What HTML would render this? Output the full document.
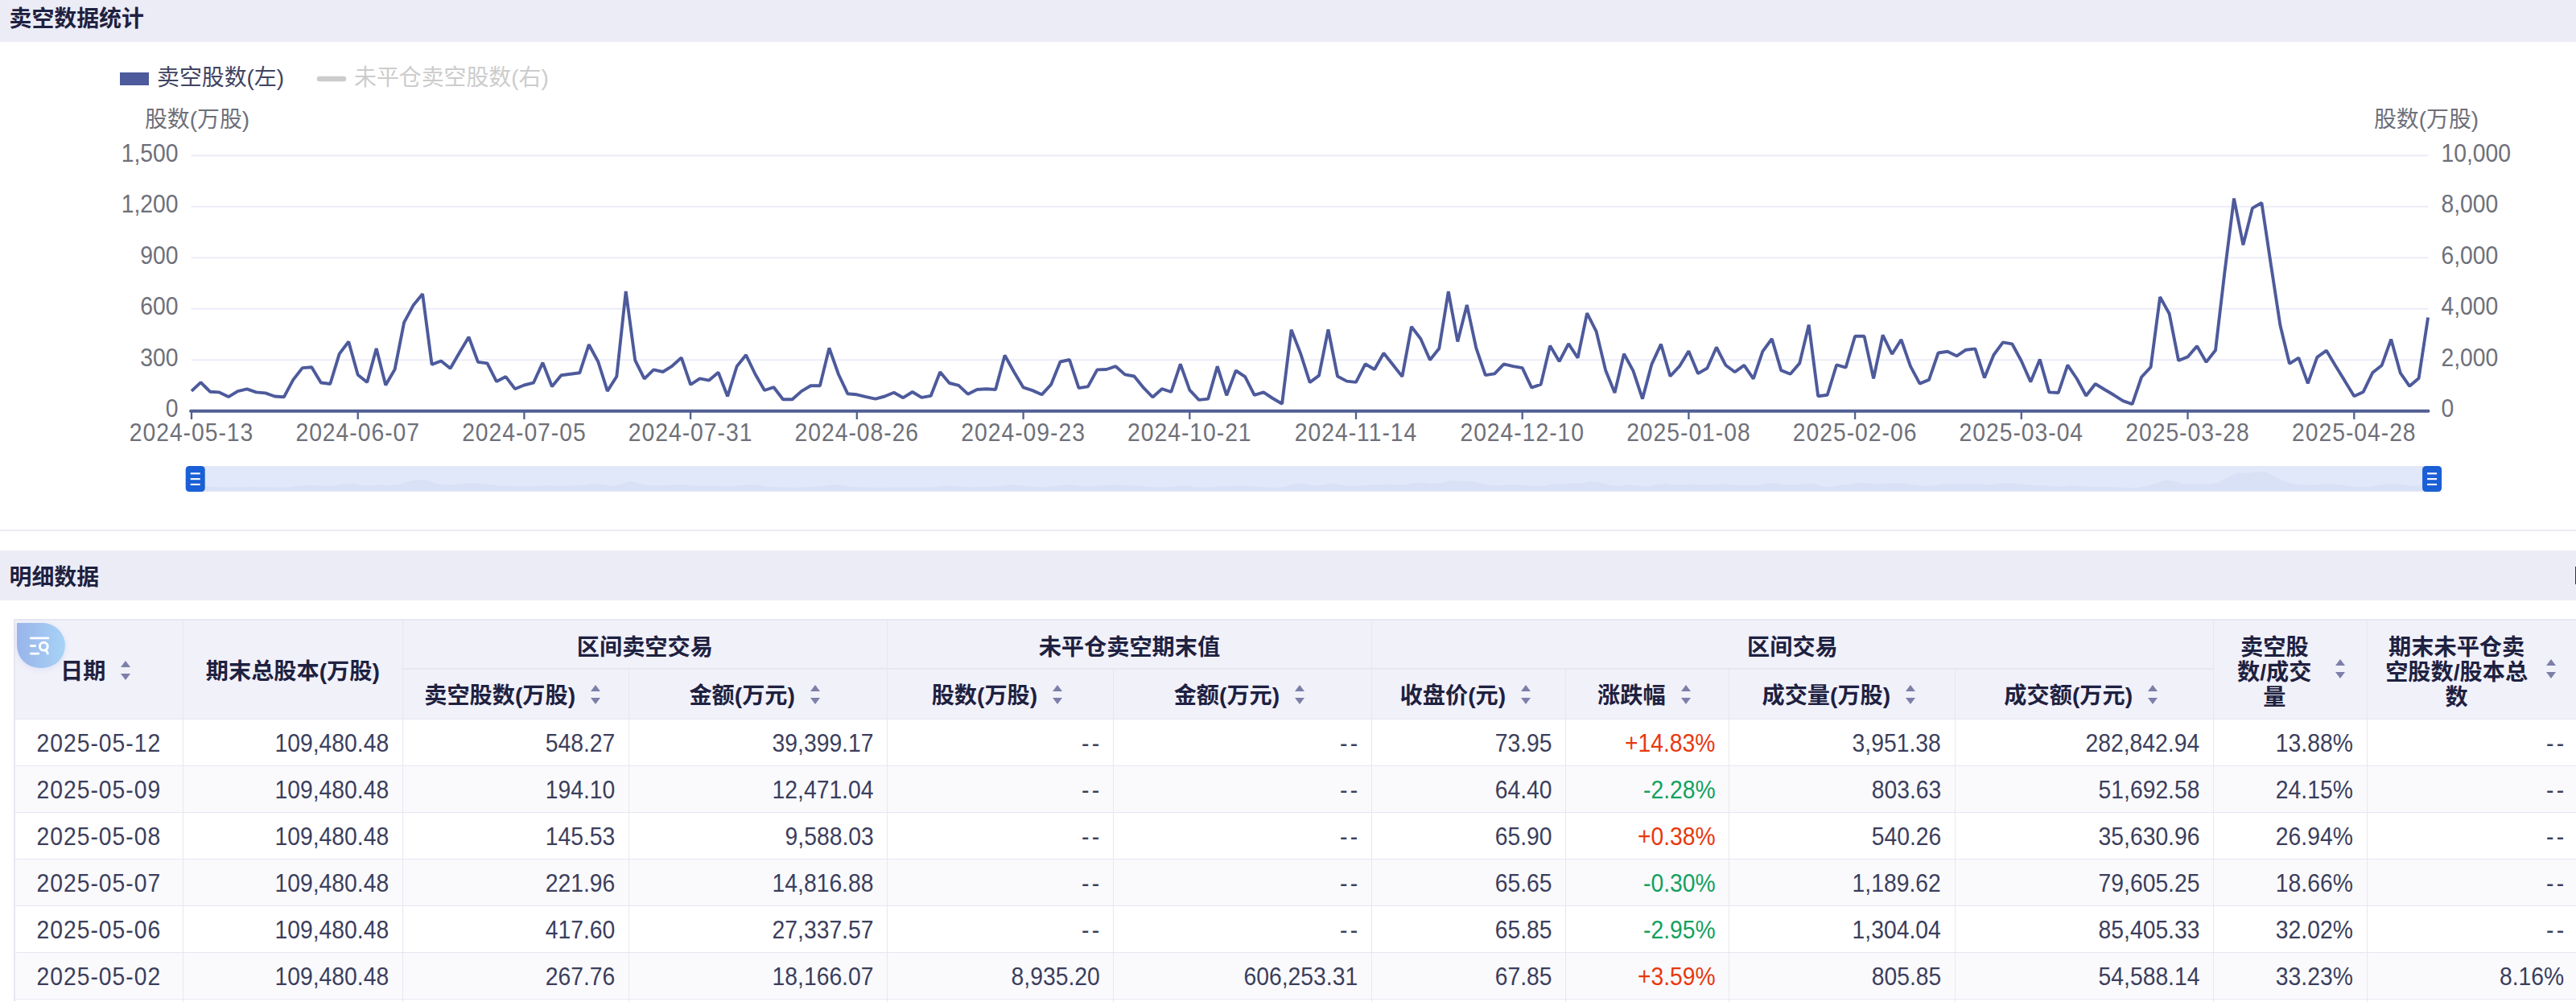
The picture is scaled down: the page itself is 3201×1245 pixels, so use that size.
<!DOCTYPE html>
<html lang="zh-CN"><head><meta charset="utf-8"><title>卖空数据统计</title>
<style>
html,body{margin:0;padding:0;background:#fff;}
body{width:3201px;height:1245px;overflow:hidden;position:relative;font-family:"Liberation Sans","Noto Sans CJK SC",sans-serif;color:#3b3e5c;}
.band{position:absolute;left:0;width:3201px;background:#ececf6;}
.band .t{position:absolute;left:11.5px;font-weight:bold;font-size:27.9px;color:#1e2140;white-space:nowrap;line-height:40px;}
svg{position:absolute;left:0;top:0;}
svg text{font-family:"Liberation Sans","Noto Sans CJK SC",sans-serif;}
.sep{position:absolute;left:0;width:3201px;height:2px;background:#ebebf4;}
.tbl{position:absolute;left:0;top:0;width:3201px;height:1245px;overflow:hidden;}
.c{position:absolute;box-sizing:border-box;white-space:nowrap;}
.h{background:#f1f1fa;font-weight:bold;font-size:28.2px;color:#1e2140;display:flex;align-items:center;justify-content:center;text-align:center;line-height:31px;}
.vl{position:absolute;width:1.2px;background:#e7e7f2;}
.hl{position:absolute;height:1.3px;background:#e7e7f2;}
.d{font-size:31.8px;line-height:58px;height:58px;text-align:right;padding-right:17px;color:#3b3e5c;}
.d span{display:inline-block;transform:scaleX(.89);transform-origin:right center;}
.d.dt{text-align:center;padding-right:0;letter-spacing:1.1px;}
.d.dt span{transform-origin:center center;}
.d.na{letter-spacing:3.5px;padding-right:14px;}
.up{color:#e8380d;}
.dn{color:#12a15e;}
.so{display:inline-block;width:13px;height:24px;margin-left:19px;position:relative;flex:none;top:-1.5px;}
.so:before{content:"";position:absolute;left:0;top:0;border-left:6.5px solid transparent;border-right:6.5px solid transparent;border-bottom:8.5px solid #7d7fa9;}
.so:after{content:"";position:absolute;left:0;bottom:0;border-left:6.5px solid transparent;border-right:6.5px solid transparent;border-top:8.5px solid #7d7fa9;}
</style></head>
<body>
<div class="band" style="top:0;height:52px"><div class="t" style="top:4px">卖空数据统计</div></div>
<div class="sep" style="top:657.5px"></div>
<div class="band" style="top:684px;height:61.5px"><div class="t" style="top:14px">明细数据</div><div style="position:absolute;left:3199.6px;top:20px;width:2px;height:22px;background:#2e3257"></div></div>
<svg width="3201" height="680" viewBox="0 0 3201 680">
<rect x="149" y="90" width="36" height="16" fill="#4d5a9b"/>
<text x="195" y="106" font-size="27.9" fill="#41445f">卖空股数(左)</text>
<line x1="397" y1="98" x2="427" y2="98" stroke="#cccccc" stroke-width="6.5" stroke-linecap="round"/>
<text x="440" y="106" font-size="27.9" fill="#cccccc">未平仓卖空股数(右)</text>
<text x="245" y="158" font-size="27.9" fill="#6e7079" text-anchor="middle">股数(万股)</text>
<text x="3015" y="158" font-size="27.9" fill="#6e7079" text-anchor="middle">股数(万股)</text>
<line x1="237.5" y1="193.2" x2="3017.5" y2="193.2" stroke="#ececf8" stroke-width="2"/>
<line x1="237.5" y1="256.7" x2="3017.5" y2="256.7" stroke="#ececf8" stroke-width="2"/>
<line x1="237.5" y1="320.2" x2="3017.5" y2="320.2" stroke="#ececf8" stroke-width="2"/>
<line x1="237.5" y1="383.8" x2="3017.5" y2="383.8" stroke="#ececf8" stroke-width="2"/>
<line x1="237.5" y1="447.3" x2="3017.5" y2="447.3" stroke="#ececf8" stroke-width="2"/>
<text transform="translate(221.5,200.5) scale(0.89,1)" font-size="31.8" fill="#6e7079" text-anchor="end">1,500</text>
<text transform="translate(3033.5,200.5) scale(0.89,1)" font-size="31.8" fill="#6e7079">10,000</text>
<text transform="translate(221.5,264.0) scale(0.89,1)" font-size="31.8" fill="#6e7079" text-anchor="end">1,200</text>
<text transform="translate(3033.5,264.0) scale(0.89,1)" font-size="31.8" fill="#6e7079">8,000</text>
<text transform="translate(221.5,327.5) scale(0.89,1)" font-size="31.8" fill="#6e7079" text-anchor="end">900</text>
<text transform="translate(3033.5,327.5) scale(0.89,1)" font-size="31.8" fill="#6e7079">6,000</text>
<text transform="translate(221.5,391.1) scale(0.89,1)" font-size="31.8" fill="#6e7079" text-anchor="end">600</text>
<text transform="translate(3033.5,391.1) scale(0.89,1)" font-size="31.8" fill="#6e7079">4,000</text>
<text transform="translate(221.5,454.6) scale(0.89,1)" font-size="31.8" fill="#6e7079" text-anchor="end">300</text>
<text transform="translate(3033.5,454.6) scale(0.89,1)" font-size="31.8" fill="#6e7079">2,000</text>
<text transform="translate(221.5,518.1) scale(0.89,1)" font-size="31.8" fill="#6e7079" text-anchor="end">0</text>
<text transform="translate(3033.5,518.1) scale(0.89,1)" font-size="31.8" fill="#6e7079">0</text>
<line x1="237" y1="510.8" x2="3017.5" y2="510.8" stroke="#525f93" stroke-width="3.9" stroke-linecap="round"/>
<line x1="238.0" y1="510" x2="238.0" y2="521" stroke="#525f93" stroke-width="2.3"/>
<text transform="translate(238.0,547.9) scale(0.89,1)" font-size="31.8" fill="#6e7079" text-anchor="middle" letter-spacing="1.1">2024-05-13</text>
<line x1="444.7" y1="510" x2="444.7" y2="521" stroke="#525f93" stroke-width="2.3"/>
<text transform="translate(444.7,547.9) scale(0.89,1)" font-size="31.8" fill="#6e7079" text-anchor="middle" letter-spacing="1.1">2024-06-07</text>
<line x1="651.4" y1="510" x2="651.4" y2="521" stroke="#525f93" stroke-width="2.3"/>
<text transform="translate(651.4,547.9) scale(0.89,1)" font-size="31.8" fill="#6e7079" text-anchor="middle" letter-spacing="1.1">2024-07-05</text>
<line x1="858.1" y1="510" x2="858.1" y2="521" stroke="#525f93" stroke-width="2.3"/>
<text transform="translate(858.1,547.9) scale(0.89,1)" font-size="31.8" fill="#6e7079" text-anchor="middle" letter-spacing="1.1">2024-07-31</text>
<line x1="1064.8" y1="510" x2="1064.8" y2="521" stroke="#525f93" stroke-width="2.3"/>
<text transform="translate(1064.8,547.9) scale(0.89,1)" font-size="31.8" fill="#6e7079" text-anchor="middle" letter-spacing="1.1">2024-08-26</text>
<line x1="1271.6" y1="510" x2="1271.6" y2="521" stroke="#525f93" stroke-width="2.3"/>
<text transform="translate(1271.6,547.9) scale(0.89,1)" font-size="31.8" fill="#6e7079" text-anchor="middle" letter-spacing="1.1">2024-09-23</text>
<line x1="1478.3" y1="510" x2="1478.3" y2="521" stroke="#525f93" stroke-width="2.3"/>
<text transform="translate(1478.3,547.9) scale(0.89,1)" font-size="31.8" fill="#6e7079" text-anchor="middle" letter-spacing="1.1">2024-10-21</text>
<line x1="1685.0" y1="510" x2="1685.0" y2="521" stroke="#525f93" stroke-width="2.3"/>
<text transform="translate(1685.0,547.9) scale(0.89,1)" font-size="31.8" fill="#6e7079" text-anchor="middle" letter-spacing="1.1">2024-11-14</text>
<line x1="1891.7" y1="510" x2="1891.7" y2="521" stroke="#525f93" stroke-width="2.3"/>
<text transform="translate(1891.7,547.9) scale(0.89,1)" font-size="31.8" fill="#6e7079" text-anchor="middle" letter-spacing="1.1">2024-12-10</text>
<line x1="2098.4" y1="510" x2="2098.4" y2="521" stroke="#525f93" stroke-width="2.3"/>
<text transform="translate(2098.4,547.9) scale(0.89,1)" font-size="31.8" fill="#6e7079" text-anchor="middle" letter-spacing="1.1">2025-01-08</text>
<line x1="2305.1" y1="510" x2="2305.1" y2="521" stroke="#525f93" stroke-width="2.3"/>
<text transform="translate(2305.1,547.9) scale(0.89,1)" font-size="31.8" fill="#6e7079" text-anchor="middle" letter-spacing="1.1">2025-02-06</text>
<line x1="2511.8" y1="510" x2="2511.8" y2="521" stroke="#525f93" stroke-width="2.3"/>
<text transform="translate(2511.8,547.9) scale(0.89,1)" font-size="31.8" fill="#6e7079" text-anchor="middle" letter-spacing="1.1">2025-03-04</text>
<line x1="2718.5" y1="510" x2="2718.5" y2="521" stroke="#525f93" stroke-width="2.3"/>
<text transform="translate(2718.5,547.9) scale(0.89,1)" font-size="31.8" fill="#6e7079" text-anchor="middle" letter-spacing="1.1">2025-03-28</text>
<line x1="2925.3" y1="510" x2="2925.3" y2="521" stroke="#525f93" stroke-width="2.3"/>
<text transform="translate(2925.3,547.9) scale(0.89,1)" font-size="31.8" fill="#6e7079" text-anchor="middle" letter-spacing="1.1">2025-04-28</text>
<polyline points="238.0,485.9 249.5,475.1 261.0,486.7 272.5,487.4 283.9,493.1 295.4,486.1 306.9,483.4 318.4,487.4 329.9,488.4 341.4,492.5 352.8,493.3 364.3,471.9 375.8,457.1 387.3,456.3 398.8,475.5 410.3,477.0 421.7,439.6 433.2,424.5 444.7,465.8 456.2,475.1 467.7,433.0 479.2,478.5 490.6,459.0 502.1,400.7 513.6,379.3 525.1,365.3 536.6,452.9 548.1,448.5 559.6,457.8 571.0,438.1 582.5,418.8 594.0,449.9 605.5,451.4 617.0,474.1 628.5,468.1 639.9,483.2 651.4,478.5 662.9,475.7 674.4,450.6 685.9,480.2 697.4,466.2 708.8,464.7 720.3,463.3 731.8,428.2 743.3,449.5 754.8,485.9 766.3,467.7 777.7,361.9 789.2,447.6 800.7,470.7 812.2,459.4 823.7,462.0 835.2,454.8 846.7,444.4 858.1,477.9 869.6,470.4 881.1,472.6 892.6,462.8 904.1,492.5 915.6,455.2 927.0,441.1 938.5,465.0 950.0,485.0 961.5,481.2 973.0,496.3 984.5,496.3 995.9,486.1 1007.4,479.3 1018.9,479.3 1030.4,432.4 1041.9,465.0 1053.4,489.3 1064.8,490.3 1076.3,493.1 1087.8,495.6 1099.3,492.5 1110.8,487.8 1122.3,494.2 1133.8,487.0 1145.2,493.9 1156.7,491.8 1168.2,462.2 1179.7,476.0 1191.2,478.9 1202.7,489.7 1214.1,484.0 1225.6,483.2 1237.1,484.0 1248.6,441.5 1260.1,462.2 1271.6,481.4 1283.0,485.1 1294.5,490.3 1306.0,477.9 1317.5,449.5 1329.0,447.0 1340.5,482.1 1351.9,480.4 1363.4,459.4 1374.9,459.0 1386.4,455.2 1397.9,465.4 1409.4,467.5 1420.9,481.7 1432.3,493.5 1443.8,483.2 1455.3,487.0 1466.8,452.3 1478.3,484.6 1489.8,496.9 1501.2,495.6 1512.7,455.2 1524.2,491.2 1535.7,460.5 1547.2,468.1 1558.7,490.8 1570.1,487.4 1581.6,495.0 1593.1,501.8 1604.6,409.7 1616.1,439.1 1627.6,475.1 1639.0,466.6 1650.5,409.3 1662.0,467.5 1673.5,473.6 1685.0,474.9 1696.5,452.3 1708.0,459.0 1719.4,438.7 1730.9,453.3 1742.4,467.9 1753.9,405.9 1765.4,421.0 1776.9,447.2 1788.3,433.0 1799.8,362.2 1811.3,424.5 1822.8,378.9 1834.3,432.4 1845.8,466.2 1857.2,464.3 1868.7,452.3 1880.2,455.2 1891.7,457.1 1903.2,481.7 1914.7,477.6 1926.1,429.6 1937.6,449.1 1949.1,427.1 1960.6,444.7 1972.1,389.2 1983.6,411.9 1995.1,459.9 2006.5,488.0 2018.0,439.6 2029.5,460.9 2041.0,495.6 2052.5,452.3 2064.0,427.7 2075.4,467.5 2086.9,455.2 2098.4,436.2 2109.9,464.1 2121.4,457.5 2132.9,431.5 2144.3,453.7 2155.8,462.2 2167.3,453.9 2178.8,470.7 2190.3,436.7 2201.8,421.0 2213.2,460.1 2224.7,464.7 2236.2,451.4 2247.7,403.6 2259.2,492.2 2270.7,490.8 2282.2,453.3 2293.6,456.7 2305.1,417.8 2316.6,417.8 2328.1,470.4 2339.6,416.3 2351.1,440.0 2362.5,422.0 2374.0,455.2 2385.5,476.6 2397.0,471.9 2408.5,438.5 2420.0,436.8 2431.4,442.3 2442.9,434.7 2454.4,433.4 2465.9,469.4 2477.4,441.0 2488.9,425.4 2500.3,427.3 2511.8,448.5 2523.3,474.5 2534.8,446.6 2546.3,487.4 2557.8,488.0 2569.3,453.7 2580.7,470.5 2592.2,491.8 2603.7,477.0 2615.2,484.0 2626.7,490.8 2638.2,498.2 2649.6,502.2 2661.1,468.5 2672.6,456.1 2684.1,368.9 2695.6,389.7 2707.1,448.0 2718.5,443.4 2730.0,430.0 2741.5,449.9 2753.0,435.3 2764.5,337.5 2776.0,246.6 2787.4,304.4 2798.9,258.6 2810.4,252.0 2821.9,328.7 2833.4,404.0 2844.9,451.8 2856.4,444.7 2867.8,476.4 2879.3,443.8 2890.8,435.6 2902.3,454.8 2913.8,473.4 2925.3,492.2 2936.7,486.9 2948.2,463.1 2959.7,453.9 2971.2,421.6 2982.7,463.3 2994.2,479.8 3005.6,470.0 3017.1,394.5" fill="none" stroke="#4d5a9b" stroke-width="3.9" stroke-linejoin="bevel" stroke-linecap="butt"/>
<rect x="243" y="579.2" width="2779" height="31.6" fill="#e0e8f9"/>
<rect x="243" y="579.2" width="2779" height="1.3" fill="#e5e6f6"/>
<rect x="243" y="609.5" width="2779" height="1.3" fill="#e5e6f6"/>
<polygon points="242.7,609.5 242.7,605.0 254.2,604.6 265.7,605.1 277.2,605.4 288.6,605.6 300.1,605.3 311.6,605.1 323.1,605.3 334.6,605.4 346.1,605.7 357.5,605.4 369.0,604.1 380.5,603.0 392.0,603.0 403.5,604.0 415.0,603.8 426.4,601.6 437.9,600.9 449.4,602.9 460.9,603.4 472.4,602.2 483.9,603.4 495.3,602.2 506.8,598.5 518.3,596.2 529.8,596.6 541.3,600.8 552.8,602.2 564.3,602.3 575.7,601.1 587.2,600.3 598.7,601.6 610.2,602.6 621.7,603.7 633.2,604.0 644.6,604.6 656.1,604.6 667.6,603.9 679.1,603.1 690.6,603.9 702.1,603.7 713.5,603.4 725.0,602.7 736.5,601.2 748.0,602.3 759.5,604.2 771.0,602.1 782.4,597.9 793.9,600.8 805.4,603.3 816.9,603.2 828.4,603.0 839.9,602.5 851.4,602.4 862.8,603.8 874.3,604.0 885.8,603.8 897.3,603.9 908.8,604.6 920.3,603.0 931.7,602.0 943.2,603.3 954.7,604.7 966.2,605.1 977.7,605.8 989.2,605.9 1000.6,605.2 1012.1,604.7 1023.6,603.8 1035.1,602.0 1046.6,603.2 1058.1,605.1 1069.5,605.6 1081.0,605.8 1092.5,605.9 1104.0,605.7 1115.5,605.5 1127.0,605.7 1138.5,605.5 1149.9,605.7 1161.4,605.2 1172.9,603.9 1184.4,604.1 1195.9,604.7 1207.4,605.2 1218.8,605.1 1230.3,605.0 1241.8,604.3 1253.3,602.5 1264.8,603.1 1276.3,604.5 1287.7,605.1 1299.2,605.2 1310.7,604.2 1322.2,602.5 1333.7,602.5 1345.2,604.2 1356.6,604.4 1368.1,603.3 1379.6,602.8 1391.1,602.8 1402.6,603.3 1414.1,603.8 1425.6,604.8 1437.0,605.4 1448.5,605.2 1460.0,604.6 1471.5,603.5 1483.0,604.7 1494.5,605.9 1505.9,605.3 1517.4,603.9 1528.9,604.5 1540.4,603.7 1551.9,603.9 1563.4,605.1 1574.8,605.5 1586.3,605.9 1597.8,604.8 1609.3,600.7 1620.8,601.3 1632.3,603.5 1643.7,602.7 1655.2,600.6 1666.7,602.7 1678.2,604.0 1689.7,603.8 1701.2,602.8 1712.7,602.4 1724.1,601.7 1735.6,602.4 1747.1,602.3 1758.6,599.7 1770.1,599.8 1781.6,601.2 1793.0,599.7 1804.5,596.9 1816.0,598.1 1827.5,597.7 1839.0,600.3 1850.5,602.9 1861.9,603.2 1873.4,602.6 1884.9,602.5 1896.4,603.1 1907.9,604.3 1919.4,603.7 1930.8,601.5 1942.3,601.3 1953.8,600.8 1965.3,600.4 1976.8,598.3 1988.3,599.3 1999.8,602.6 2011.2,604.0 2022.7,602.4 2034.2,603.3 2045.7,604.7 2057.2,602.6 2068.7,601.3 2080.1,602.7 2091.6,602.4 2103.1,601.7 2114.6,602.7 2126.1,602.4 2137.6,601.4 2149.0,602.2 2160.5,602.9 2172.0,602.9 2183.5,603.0 2195.0,601.3 2206.5,600.6 2217.9,602.4 2229.4,603.1 2240.9,601.6 2252.4,600.5 2263.9,604.2 2275.4,605.0 2286.9,603.1 2298.3,602.0 2309.8,600.0 2321.3,600.3 2332.8,602.0 2344.3,600.6 2355.8,600.5 2367.2,600.6 2378.7,602.4 2390.2,603.9 2401.7,603.5 2413.2,601.7 2424.7,601.1 2436.1,601.2 2447.6,600.9 2459.1,601.3 2470.6,602.7 2482.1,601.6 2493.6,600.3 2505.0,600.5 2516.5,602.1 2528.0,603.3 2539.5,603.0 2551.0,604.6 2562.5,604.8 2574.0,603.3 2585.4,603.9 2596.9,605.1 2608.4,604.8 2619.9,605.0 2631.4,605.6 2642.9,606.2 2654.3,605.9 2665.8,604.1 2677.3,601.4 2688.8,597.0 2700.3,597.6 2711.8,600.9 2723.2,601.4 2734.7,601.0 2746.2,601.5 2757.7,599.4 2769.2,592.6 2780.7,587.3 2792.1,587.9 2803.6,586.4 2815.1,586.6 2826.6,591.7 2838.1,597.7 2849.6,601.3 2861.1,602.3 2872.5,603.3 2884.0,602.0 2895.5,601.3 2907.0,602.5 2918.5,604.1 2930.0,605.3 2941.4,604.9 2952.9,603.5 2964.4,602.0 2975.9,600.9 2987.4,602.8 2998.9,604.2 3010.3,602.7 3021.8,598.7 3021.8,609.5" fill="#d8e1f5"/>
<rect x="230.7" y="579" width="24" height="32" rx="4.5" fill="#1a5fd6"/>
<rect x="236.7" y="587.3" width="12" height="2.1" fill="#fff"/>
<rect x="236.7" y="594.1" width="12" height="2.1" fill="#fff"/>
<rect x="236.7" y="600.9" width="12" height="2.1" fill="#fff"/>
<rect x="3010.1" y="579" width="24" height="32" rx="4.5" fill="#1a5fd6"/>
<rect x="3016.1" y="587.3" width="12" height="2.1" fill="#fff"/>
<rect x="3016.1" y="594.1" width="12" height="2.1" fill="#fff"/>
<rect x="3016.1" y="600.9" width="12" height="2.1" fill="#fff"/>
</svg>
<div class="tbl">
<div class="c h" style="left:18.0px;top:770.5px;width:209.3px;height:123.4px;padding-top:5px;padding-right:7px"><span>日期</span><span class="so"></span></div>
<div class="c h" style="left:227.3px;top:770.5px;width:273.0px;height:123.4px;padding-top:5px">期末总股本(万股)</div>
<div class="c h" style="left:500.3px;top:770.5px;width:602.1px;height:60.9px;padding-top:8px">区间卖空交易</div>
<div class="c h" style="left:1102.4px;top:770.5px;width:602.1px;height:60.9px;padding-top:8px">未平仓卖空期末值</div>
<div class="c h" style="left:1704.5px;top:770.5px;width:1045.8px;height:60.9px;padding-top:8px">区间交易</div>
<div class="c h" style="left:500.3px;top:831.4px;width:280.7px;height:62.5px;padding-top:3.5px;padding-right:7px"><span>卖空股数(万股)</span><span class="so"></span></div>
<div class="c h" style="left:781.0px;top:831.4px;width:321.4px;height:62.5px;padding-top:3.5px;padding-right:7px"><span>金额(万元)</span><span class="so"></span></div>
<div class="c h" style="left:1102.4px;top:831.4px;width:281.0px;height:62.5px;padding-top:3.5px;padding-right:7px"><span>股数(万股)</span><span class="so"></span></div>
<div class="c h" style="left:1383.4px;top:831.4px;width:321.1px;height:62.5px;padding-top:3.5px;padding-right:7px"><span>金额(万元)</span><span class="so"></span></div>
<div class="c h" style="left:1704.5px;top:831.4px;width:240.7px;height:62.5px;padding-top:3.5px;padding-right:7px"><span>收盘价(元)</span><span class="so"></span></div>
<div class="c h" style="left:1945.2px;top:831.4px;width:203.4px;height:62.5px;padding-top:3.5px;padding-right:7px"><span>涨跌幅</span><span class="so"></span></div>
<div class="c h" style="left:2148.6px;top:831.4px;width:280.5px;height:62.5px;padding-top:3.5px;padding-right:7px"><span>成交量(万股)</span><span class="so"></span></div>
<div class="c h" style="left:2429.1px;top:831.4px;width:321.2px;height:62.5px;padding-top:3.5px;padding-right:7px"><span>成交额(万元)</span><span class="so"></span></div>
<div class="c h" style="left:2750.3px;top:770.5px;width:191.0px;height:123.4px;padding:6.5px 26px 0 19px"><span style="flex:1">卖空股<br>数/成交<br>量</span><span class="so" style="top:-4.5px"></span></div>
<div class="c h" style="left:2941.3px;top:770.5px;width:261.7px;height:123.4px;padding:6.5px 26px 0 19px"><span style="flex:1">期末未平仓卖<br>空股数/股本总<br>数</span><span class="so" style="top:-4.5px"></span></div>
<div class="c" style="left:18px;top:893.9px;width:3185px;height:58.0px;background:#fff"></div>
<div class="c d dt" style="left:18.0px;top:894.1px;width:209.3px"><span>2025-05-12</span></div>
<div class="c d" style="left:227.3px;top:894.1px;width:273.0px"><span>109,480.48</span></div>
<div class="c d" style="left:500.3px;top:894.1px;width:280.7px"><span>548.27</span></div>
<div class="c d" style="left:781.0px;top:894.1px;width:321.4px"><span>39,399.17</span></div>
<div class="c d na" style="left:1102.4px;top:894.1px;width:281.0px"><span>--</span></div>
<div class="c d na" style="left:1383.4px;top:894.1px;width:321.1px"><span>--</span></div>
<div class="c d" style="left:1704.5px;top:894.1px;width:240.7px"><span>73.95</span></div>
<div class="c d up" style="left:1945.2px;top:894.1px;width:203.4px"><span>+14.83%</span></div>
<div class="c d" style="left:2148.6px;top:894.1px;width:280.5px"><span>3,951.38</span></div>
<div class="c d" style="left:2429.1px;top:894.1px;width:321.2px"><span>282,842.94</span></div>
<div class="c d" style="left:2750.3px;top:894.1px;width:191.0px"><span>13.88%</span></div>
<div class="c d na" style="left:2941.3px;top:894.1px;width:261.7px"><span>--</span></div>
<div class="c" style="left:18px;top:951.9px;width:3185px;height:58.0px;background:#fafafd"></div>
<div class="c d dt" style="left:18.0px;top:952.1px;width:209.3px"><span>2025-05-09</span></div>
<div class="c d" style="left:227.3px;top:952.1px;width:273.0px"><span>109,480.48</span></div>
<div class="c d" style="left:500.3px;top:952.1px;width:280.7px"><span>194.10</span></div>
<div class="c d" style="left:781.0px;top:952.1px;width:321.4px"><span>12,471.04</span></div>
<div class="c d na" style="left:1102.4px;top:952.1px;width:281.0px"><span>--</span></div>
<div class="c d na" style="left:1383.4px;top:952.1px;width:321.1px"><span>--</span></div>
<div class="c d" style="left:1704.5px;top:952.1px;width:240.7px"><span>64.40</span></div>
<div class="c d dn" style="left:1945.2px;top:952.1px;width:203.4px"><span>-2.28%</span></div>
<div class="c d" style="left:2148.6px;top:952.1px;width:280.5px"><span>803.63</span></div>
<div class="c d" style="left:2429.1px;top:952.1px;width:321.2px"><span>51,692.58</span></div>
<div class="c d" style="left:2750.3px;top:952.1px;width:191.0px"><span>24.15%</span></div>
<div class="c d na" style="left:2941.3px;top:952.1px;width:261.7px"><span>--</span></div>
<div class="c" style="left:18px;top:1009.9px;width:3185px;height:58.0px;background:#fff"></div>
<div class="c d dt" style="left:18.0px;top:1010.1px;width:209.3px"><span>2025-05-08</span></div>
<div class="c d" style="left:227.3px;top:1010.1px;width:273.0px"><span>109,480.48</span></div>
<div class="c d" style="left:500.3px;top:1010.1px;width:280.7px"><span>145.53</span></div>
<div class="c d" style="left:781.0px;top:1010.1px;width:321.4px"><span>9,588.03</span></div>
<div class="c d na" style="left:1102.4px;top:1010.1px;width:281.0px"><span>--</span></div>
<div class="c d na" style="left:1383.4px;top:1010.1px;width:321.1px"><span>--</span></div>
<div class="c d" style="left:1704.5px;top:1010.1px;width:240.7px"><span>65.90</span></div>
<div class="c d up" style="left:1945.2px;top:1010.1px;width:203.4px"><span>+0.38%</span></div>
<div class="c d" style="left:2148.6px;top:1010.1px;width:280.5px"><span>540.26</span></div>
<div class="c d" style="left:2429.1px;top:1010.1px;width:321.2px"><span>35,630.96</span></div>
<div class="c d" style="left:2750.3px;top:1010.1px;width:191.0px"><span>26.94%</span></div>
<div class="c d na" style="left:2941.3px;top:1010.1px;width:261.7px"><span>--</span></div>
<div class="c" style="left:18px;top:1067.8px;width:3185px;height:58.0px;background:#fafafd"></div>
<div class="c d dt" style="left:18.0px;top:1068.0px;width:209.3px"><span>2025-05-07</span></div>
<div class="c d" style="left:227.3px;top:1068.0px;width:273.0px"><span>109,480.48</span></div>
<div class="c d" style="left:500.3px;top:1068.0px;width:280.7px"><span>221.96</span></div>
<div class="c d" style="left:781.0px;top:1068.0px;width:321.4px"><span>14,816.88</span></div>
<div class="c d na" style="left:1102.4px;top:1068.0px;width:281.0px"><span>--</span></div>
<div class="c d na" style="left:1383.4px;top:1068.0px;width:321.1px"><span>--</span></div>
<div class="c d" style="left:1704.5px;top:1068.0px;width:240.7px"><span>65.65</span></div>
<div class="c d dn" style="left:1945.2px;top:1068.0px;width:203.4px"><span>-0.30%</span></div>
<div class="c d" style="left:2148.6px;top:1068.0px;width:280.5px"><span>1,189.62</span></div>
<div class="c d" style="left:2429.1px;top:1068.0px;width:321.2px"><span>79,605.25</span></div>
<div class="c d" style="left:2750.3px;top:1068.0px;width:191.0px"><span>18.66%</span></div>
<div class="c d na" style="left:2941.3px;top:1068.0px;width:261.7px"><span>--</span></div>
<div class="c" style="left:18px;top:1125.8px;width:3185px;height:58.0px;background:#fff"></div>
<div class="c d dt" style="left:18.0px;top:1126.0px;width:209.3px"><span>2025-05-06</span></div>
<div class="c d" style="left:227.3px;top:1126.0px;width:273.0px"><span>109,480.48</span></div>
<div class="c d" style="left:500.3px;top:1126.0px;width:280.7px"><span>417.60</span></div>
<div class="c d" style="left:781.0px;top:1126.0px;width:321.4px"><span>27,337.57</span></div>
<div class="c d na" style="left:1102.4px;top:1126.0px;width:281.0px"><span>--</span></div>
<div class="c d na" style="left:1383.4px;top:1126.0px;width:321.1px"><span>--</span></div>
<div class="c d" style="left:1704.5px;top:1126.0px;width:240.7px"><span>65.85</span></div>
<div class="c d dn" style="left:1945.2px;top:1126.0px;width:203.4px"><span>-2.95%</span></div>
<div class="c d" style="left:2148.6px;top:1126.0px;width:280.5px"><span>1,304.04</span></div>
<div class="c d" style="left:2429.1px;top:1126.0px;width:321.2px"><span>85,405.33</span></div>
<div class="c d" style="left:2750.3px;top:1126.0px;width:191.0px"><span>32.02%</span></div>
<div class="c d na" style="left:2941.3px;top:1126.0px;width:261.7px"><span>--</span></div>
<div class="c" style="left:18px;top:1183.8px;width:3185px;height:58.0px;background:#fafafd"></div>
<div class="c d dt" style="left:18.0px;top:1184.0px;width:209.3px"><span>2025-05-02</span></div>
<div class="c d" style="left:227.3px;top:1184.0px;width:273.0px"><span>109,480.48</span></div>
<div class="c d" style="left:500.3px;top:1184.0px;width:280.7px"><span>267.76</span></div>
<div class="c d" style="left:781.0px;top:1184.0px;width:321.4px"><span>18,166.07</span></div>
<div class="c d" style="left:1102.4px;top:1184.0px;width:281.0px"><span>8,935.20</span></div>
<div class="c d" style="left:1383.4px;top:1184.0px;width:321.1px"><span>606,253.31</span></div>
<div class="c d" style="left:1704.5px;top:1184.0px;width:240.7px"><span>67.85</span></div>
<div class="c d up" style="left:1945.2px;top:1184.0px;width:203.4px"><span>+3.59%</span></div>
<div class="c d" style="left:2148.6px;top:1184.0px;width:280.5px"><span>805.85</span></div>
<div class="c d" style="left:2429.1px;top:1184.0px;width:321.2px"><span>54,588.14</span></div>
<div class="c d" style="left:2750.3px;top:1184.0px;width:191.0px"><span>33.23%</span></div>
<div class="c d" style="left:2941.3px;top:1184.0px;width:261.7px"><span>8.16%</span></div>
<div class="c" style="left:18px;top:1241.8px;width:3185px;height:58.0px;background:#fff"></div>
<div class="c d dt" style="left:18.0px;top:1242.0px;width:209.3px"><span></span></div>
<div class="c d" style="left:227.3px;top:1242.0px;width:273.0px"><span></span></div>
<div class="c d" style="left:500.3px;top:1242.0px;width:280.7px"><span></span></div>
<div class="c d" style="left:781.0px;top:1242.0px;width:321.4px"><span></span></div>
<div class="c d" style="left:1102.4px;top:1242.0px;width:281.0px"><span></span></div>
<div class="c d" style="left:1383.4px;top:1242.0px;width:321.1px"><span></span></div>
<div class="c d" style="left:1704.5px;top:1242.0px;width:240.7px"><span></span></div>
<div class="c d dn" style="left:1945.2px;top:1242.0px;width:203.4px"><span></span></div>
<div class="c d" style="left:2148.6px;top:1242.0px;width:280.5px"><span></span></div>
<div class="c d" style="left:2429.1px;top:1242.0px;width:321.2px"><span></span></div>
<div class="c d" style="left:2750.3px;top:1242.0px;width:191.0px"><span></span></div>
<div class="c d" style="left:2941.3px;top:1242.0px;width:261.7px"><span></span></div>
<div class="hl" style="left:17px;top:769.3px;width:3190px;height:2px"></div>
<div class="hl" style="left:500.3px;top:830.4px;width:2250.0px"></div>
<div class="hl" style="left:17px;top:892.8px;width:3190px"></div>
<div class="hl" style="left:17px;top:950.7px;width:3190px"></div>
<div class="hl" style="left:17px;top:1008.7px;width:3190px"></div>
<div class="hl" style="left:17px;top:1066.7px;width:3190px"></div>
<div class="hl" style="left:17px;top:1124.7px;width:3190px"></div>
<div class="hl" style="left:17px;top:1182.6px;width:3190px"></div>
<div class="hl" style="left:17px;top:1240.6px;width:3190px"></div>
<div class="hl" style="left:17px;top:1298.6px;width:3190px"></div>
<div class="vl" style="left:17px;top:769.5px;height:474.5px;width:2px"></div>
<div class="vl" style="left:226.9px;top:770.5px;height:474.5px"></div>
<div class="vl" style="left:499.9px;top:770.5px;height:474.5px"></div>
<div class="vl" style="left:780.5px;top:831.4px;height:413.6px"></div>
<div class="vl" style="left:1102.0px;top:770.5px;height:474.5px"></div>
<div class="vl" style="left:1383.0px;top:831.4px;height:413.6px"></div>
<div class="vl" style="left:1704.0px;top:770.5px;height:474.5px"></div>
<div class="vl" style="left:1944.8px;top:831.4px;height:413.6px"></div>
<div class="vl" style="left:2148.2px;top:831.4px;height:413.6px"></div>
<div class="vl" style="left:2428.7px;top:831.4px;height:413.6px"></div>
<div class="vl" style="left:2749.9px;top:770.5px;height:474.5px"></div>
<div class="vl" style="left:2940.9px;top:770.5px;height:474.5px"></div>
<div style="position:absolute;left:21px;top:773.5px;width:60px;height:56px;border-radius:1px 30px 30px 30px;background:linear-gradient(90deg,#99b4ea,#a8d3f6);box-shadow:0 2px 7px rgba(120,140,200,0.16)"></div>
<svg style="left:21px;top:773.5px" width="60" height="56" viewBox="0 0 60 56"><g stroke="#fff" stroke-width="2.9" fill="none" stroke-linecap="round"><path d="M17.3 18.9H38.8M17.3 28.5H22.7M17.3 38.1H26.8"/><circle cx="33.3" cy="29.2" r="4.9"/><path d="M36 33.6L38.3 37.9"/></g></svg>
</div>
</body></html>
